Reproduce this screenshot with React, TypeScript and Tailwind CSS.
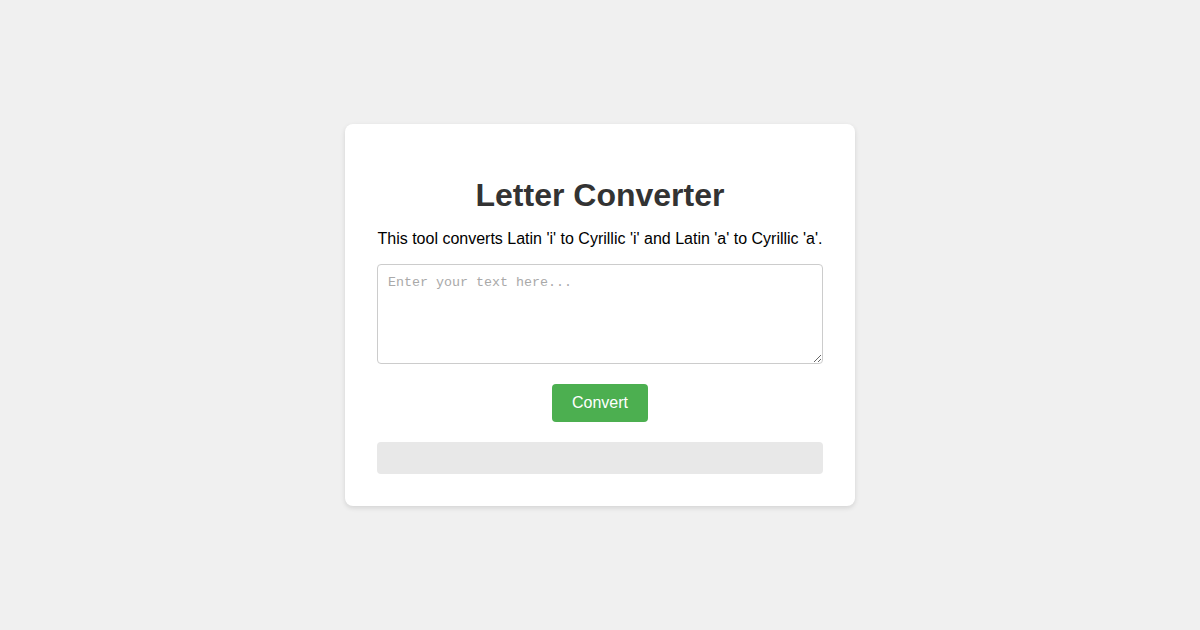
import { useState } from "react";

const swap = (s: string) => s.replace(/i/g, "і").replace(/a/g, "а");

export default function App() {
  const [text, setText] = useState("");
  const [result, setResult] = useState("");

  return (
    <div className="min-h-screen bg-[#f0f0f0] flex items-center justify-center font-['Liberation_Sans',Arial,sans-serif]">
      <div className="w-[510px] bg-white rounded-lg shadow-[0_2px_5px_rgba(0,0,0,0.12)] px-8 pt-8 pb-8 text-center">
        <h1 className="mt-[21px] text-[32px] leading-[37px] font-bold text-[#333]">Letter Converter</h1>
        <p className="mt-4 text-base leading-[18px] text-black">
          This tool converts Latin 'i' to Cyrillic 'і' and Latin 'a' to Cyrillic 'а'.
        </p>
        <textarea
          value={text}
          onChange={e => setText(e.target.value)}
          placeholder="Enter your text here..."
          className="mt-4 block w-full h-[100px] p-[10px] border border-[#ccc] rounded bg-white text-left font-['Liberation_Mono',monospace] text-[13.33px] leading-[15px] placeholder:text-[#a9a9a9] outline-none"
        />
        <button
          onClick={() => setResult(swap(text))}
          className="mt-5 h-[38px] px-5 bg-[#4caf50] text-white text-base rounded hover:bg-[#45a049] cursor-pointer"
        >
          Convert
        </button>
        <div className="mt-5 min-h-[32px] bg-[#e8e8e8] rounded px-[10px] py-[7px] text-left text-black break-words">
          {result}
        </div>
      </div>
    </div>
  );
}
